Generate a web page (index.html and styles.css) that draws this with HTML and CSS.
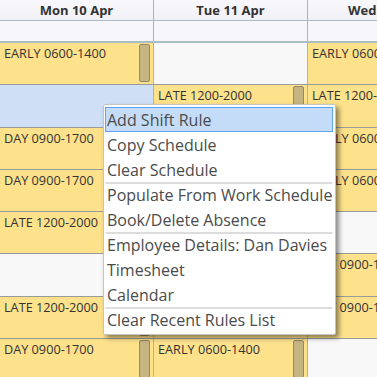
FILE: index.html
```html
<!DOCTYPE html>
<html>
<head>
<meta charset="utf-8">
<link rel="stylesheet" href="styles.css">
</head>
<body>
<div class="grid">
  <div class="row head">
    <div class="cell">Mon 10 Apr</div>
    <div class="cell">Tue 11 Apr</div>
    <div class="cell">Wed 12 Apr</div>
  </div>
  <div class="row sub">
    <div class="cell"></div>
    <div class="cell"></div>
    <div class="cell"></div>
  </div>
  <div class="row">
    <div class="cell shift">EARLY 0600-1400<span class="handle"></span></div>
    <div class="cell empty"></div>
    <div class="cell shift">EARLY 0600-1400</div>
  </div>
  <div class="row">
    <div class="cell selected"></div>
    <div class="cell shift">LATE 1200-2000<span class="handle"></span></div>
    <div class="cell shift">LATE 1200-2000</div>
  </div>
  <div class="row">
    <div class="cell shift">DAY 0900-1700</div>
    <div class="cell shift"></div>
    <div class="cell shift">EARLY 0600-1400</div>
  </div>
  <div class="row">
    <div class="cell shift">DAY 0900-1700</div>
    <div class="cell shift"></div>
    <div class="cell shift">EARLY 0600-1400</div>
  </div>
  <div class="row">
    <div class="cell shift">LATE 1200-2000</div>
    <div class="cell shift"></div>
    <div class="cell empty"></div>
  </div>
  <div class="row">
    <div class="cell empty"></div>
    <div class="cell empty"></div>
    <div class="cell shift">DAY 0900-1700</div>
  </div>
  <div class="row">
    <div class="cell shift">LATE 1200-2000<span class="handle"></span></div>
    <div class="cell shift"></div>
    <div class="cell shift">DAY 0900-1700</div>
  </div>
  <div class="row">
    <div class="cell shift">DAY 0900-1700<span class="handle"></span></div>
    <div class="cell shift">EARLY 0600-1400<span class="handle"></span></div>
    <div class="cell empty"></div>
  </div>
</div>

<div class="menu">
  <div class="item active">Add Shift Rule</div>
  <div class="item">Copy Schedule</div>
  <div class="item">Clear Schedule</div>
  <div class="item sep">Populate From Work Schedule</div>
  <div class="item">Book/Delete Absence</div>
  <div class="item sep">Employee Details: Dan Davies</div>
  <div class="item">Timesheet</div>
  <div class="item">Calendar</div>
  <div class="item sep">Clear Recent Rules List</div>
</div>
</body>
</html>
```

FILE: styles.css
```css
html, body {
  margin: 0;
  padding: 0;
  width: 377px;
  height: 377px;
  overflow: hidden;
  background: #ffffff;
  font-family: "Open Sans", "DejaVu Sans", sans-serif;
}

.grid {
  display: flex;
  flex-direction: column;
  width: 520px;
}

.row {
  display: flex;
  height: 42.3px;
  box-sizing: border-box;
  border-bottom: 1px solid #9a9a9a;
}

.cell {
  position: relative;
  width: 153px;
  flex: 0 0 153px;
  border-right: 1px solid #a3b6ba;
  box-sizing: content-box;
  font-size: 12.7px;
  color: #333333;
  padding: 0;
  overflow: hidden;
  white-space: nowrap;
}

.head {
  height: 21px;
  border-bottom: 1px solid #a9bdc3;
  background: linear-gradient(#f8f8fc, #f0f0f7);
}

.head .cell {
  font-weight: bold;
  font-size: 13px;
  text-align: center;
  line-height: 20px;
  color: #333;
}

.sub {
  height: 22px;
  border-bottom: 2px solid #a9bdc3;
  background: #f6f6fb;
}

.shift {
  background: #fde18b;
  padding-left: 4px;
  width: 149px;
  flex-basis: 149px;
  line-height: 16px;
  padding-top: 2px;
}

.empty {
  background: #f8f8f8;
}

.selected {
  background: #cfdff6;
}

.handle {
  position: absolute;
  right: 3px;
  top: 1px;
  bottom: 2px;
  width: 9px;
  background: #c6b481;
  border: 1px solid #958a6b;
  border-radius: 2px;
}

.menu {
  position: absolute;
  left: 103px;
  top: 104px;
  width: 233px;
  box-sizing: border-box;
  background: #ffffff;
  border: 1px solid #c4c4c4;
  border-radius: 2px;
  padding: 2px 2px 2px 1px;
  box-shadow: 3px 3px 5px rgba(0, 0, 0, 0.45);
}

.item {
  height: 25px;
  line-height: 24px;
  box-sizing: border-box;
  padding-left: 1px;
  font-size: 16px;
  color: #4b4b4b;
  white-space: nowrap;
  border: 1px solid transparent;
}

.item.active {
  background: #c4dcf7;
  border: 1px solid #5ea2ea;
}

.item.sep {
  border-top: 2px solid #dcdcdc;
  line-height: 23px;
}
```
